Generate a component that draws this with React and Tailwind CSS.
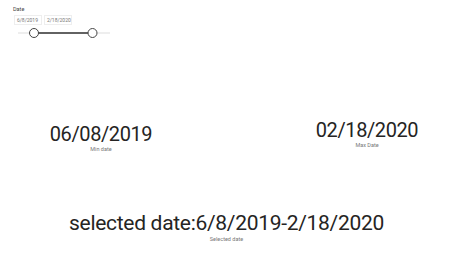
import React from "react";

export default function App() {
  return (
    <div className="w-[474px] h-[259px] bg-white overflow-hidden" style={{ fontFamily: "Roboto, 'Liberation Sans', sans-serif" }}>
      <div className="h-[50px] pl-[13px] pt-[6px]">
        <div className="text-[5.5px] leading-[7px] text-[#444]">Date</div>
        <div className="flex gap-[2px] mt-[2px] ml-[1px]">
          <div className="w-[28px] h-[10px] border border-[#eee] text-[5px] leading-[8px] pl-[2px] text-[#777]">6/8/2019</div>
          <div className="w-[28px] h-[10px] border border-[#eee] text-[5px] leading-[8px] pl-[2px] text-[#777]">2/18/2020</div>
        </div>
        <svg width="110" height="14" className="block mt-[1px] -ml-[13px]">
          <line x1="18" y1="7" x2="110" y2="7" stroke="#ddd" strokeWidth="1" />
          <line x1="34" y1="7" x2="92.5" y2="7" stroke="#333" strokeWidth="1.5" />
          <circle cx="34" cy="7" r="4.5" fill="#fff" stroke="#444" strokeWidth="1" />
          <circle cx="92.5" cy="7" r="4.5" fill="#fff" stroke="#444" strokeWidth="1" />
        </svg>
      </div>
      <div className="flex mt-[68px]">
        <div className="w-[202px] flex flex-col items-center mt-[4px]">
          <div className="text-[20px] leading-[24px] text-[#252423] tracking-[-0.4px] whitespace-nowrap">06/08/2019</div>
          <div className="text-[5.5px] leading-[7px] text-[#777]">Min date</div>
        </div>
        <div className="w-[114px]" />
        <div className="w-[102px] flex flex-col items-center">
          <div className="text-[20px] leading-[24px] text-[#252423] tracking-[-0.4px] whitespace-nowrap">02/18/2020</div>
          <div className="text-[5.5px] leading-[7px] text-[#777]">Max Date</div>
        </div>
      </div>
      <div className="flex flex-col items-center mt-[57px] w-[453px]">
        <div className="text-[21px] leading-[26px] text-[#252423] tracking-[-0.3px] whitespace-nowrap">selected date:6/8/2019-2/18/2020</div>
        <div className="text-[5.5px] leading-[7px] text-[#777]">Selected date</div>
      </div>
    </div>
  );
}
